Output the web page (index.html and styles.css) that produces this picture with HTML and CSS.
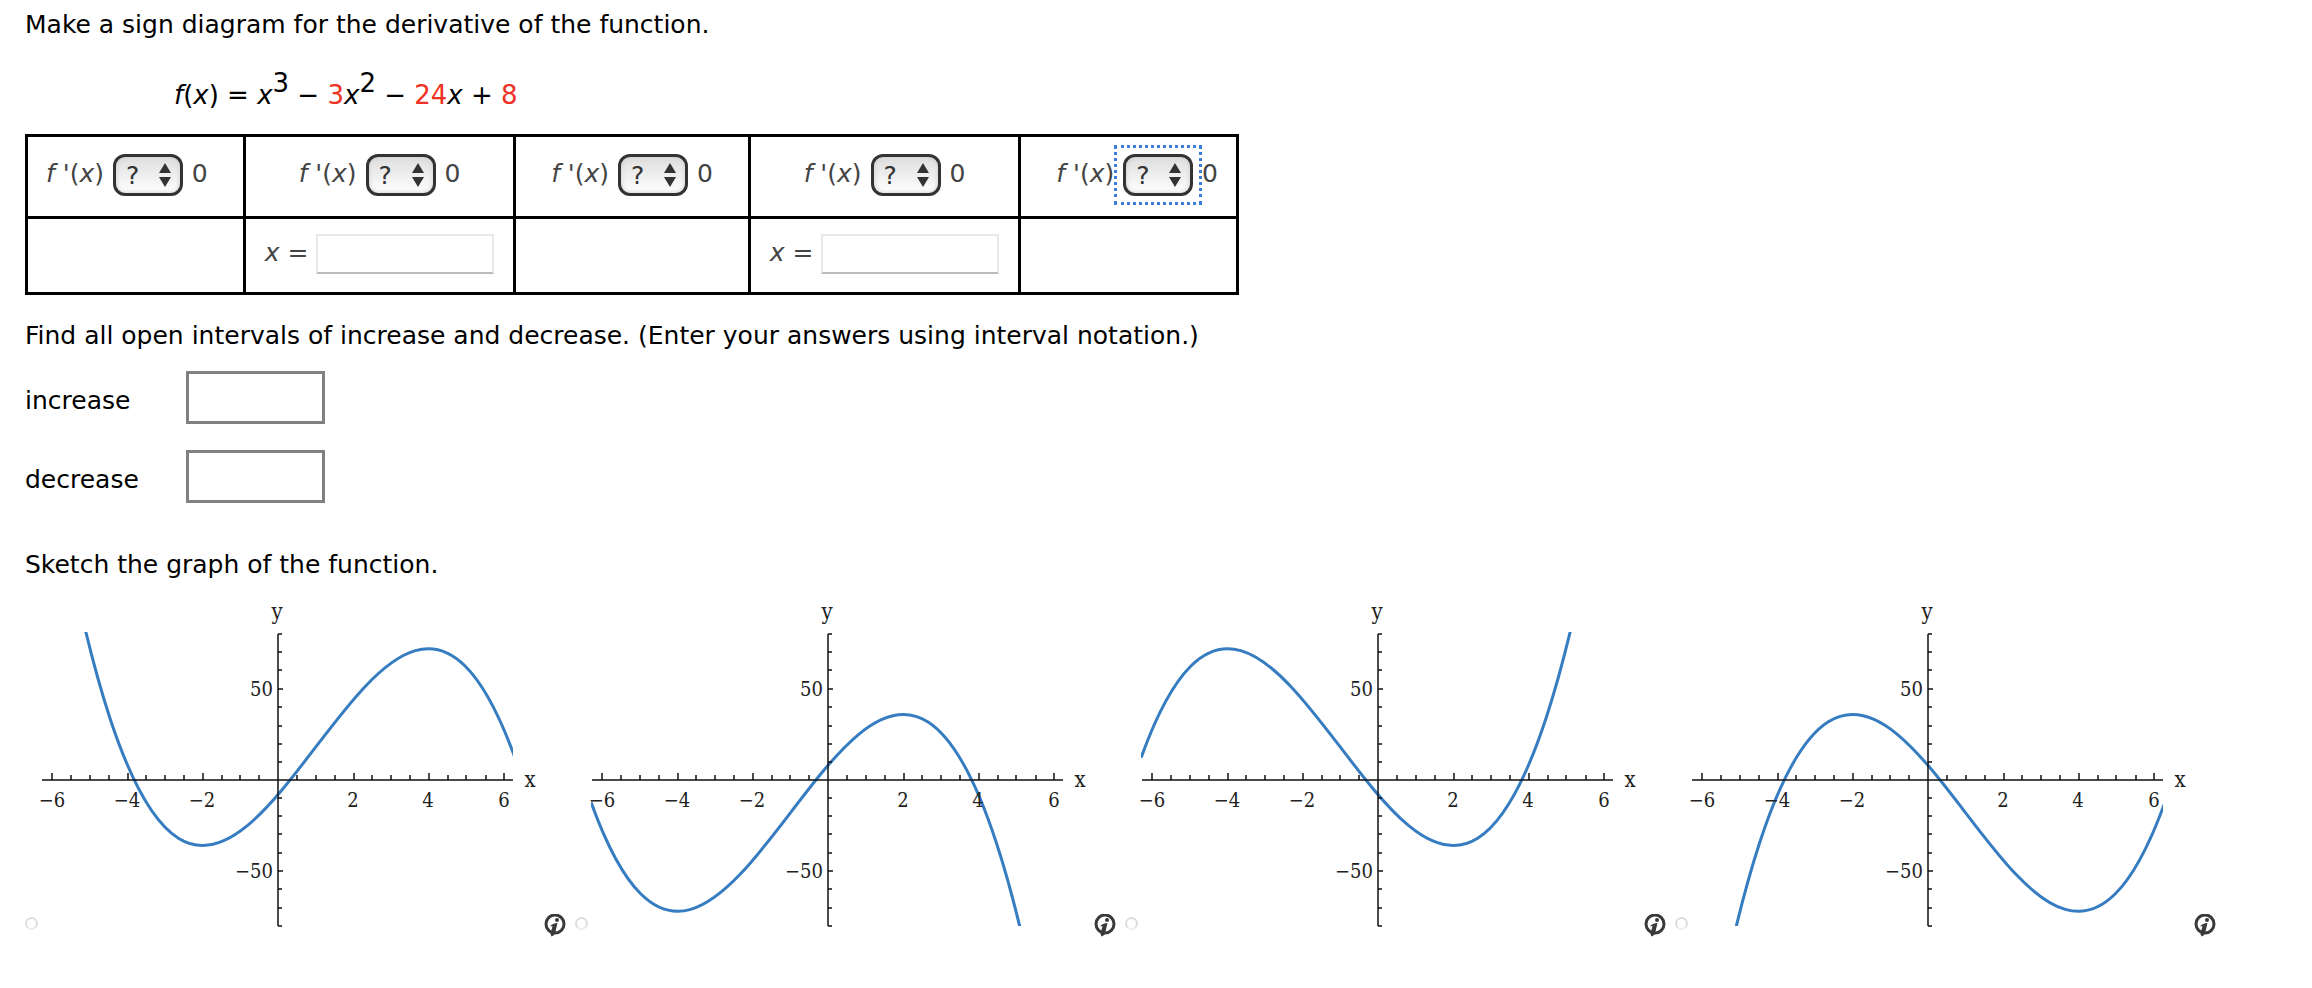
FILE: index.html
```html
<!DOCTYPE html>
<html lang="en">
  <head>
    <meta charset="UTF-8" />
    <meta name="viewport" content="width=device-width, initial-scale=1.0" />
    <title>Sign diagram</title>
    <link rel="stylesheet" href="styles.css">
  </head>
  <body>
    <!-- shared drawing parts -->
    <svg class="defs" width="0" height="0" aria-hidden="true">
      <defs>
        <clipPath id="plotArea">
          <rect x="-237" y="-148" width="472" height="294" />
        </clipPath>
        <!-- x^3 - 3x^2 - 24x + 8 -->
        <path id="cubic" d="M-236.9 382.9C-79 -635 79 461 236.9 22.3" />
        <g id="axes">
          <path d="M-236 0H235M0 -146V146" />
          <path d="M-226 0v-7M-150 0v-7M-75 0v-7M76 0v-7M151 0v-7M226 0v-7" />
          <path d="M-207 0v-5M-188 0v-5M-169 0v-5M-132 0v-5M-113 0v-5M-94 0v-5M-56 0v-5M-38 0v-5M-19 0v-5M19 0v-5M38 0v-5M57 0v-5M94 0v-5M113 0v-5M132 0v-5M170 0v-5M188 0v-5M208 0v-5" />
          <path d="M0 -91h5M0 91h5" />
          <path d="M0 -146h4M0 -128h4M0 -110h4M0 -73h4M0 -54h4M0 -36h4M0 -18h4M0 18h4M0 36h4M0 54h4M0 73h4M0 109h4M0 128h4M0 146h4" />
        </g>
        <g id="info">
          <circle cx="11" cy="10" r="9" fill="none" stroke="#3a3a3a" stroke-width="3" />
          <circle cx="13" cy="6" r="2" fill="#3a3a3a" />
          <path d="M6 12.500Q8.500 9 13.500 9L11.500 17.500Q11 21.500 7.500 22.500L6.500 20L8.500 12Z" fill="#3a3a3a" />
        </g>
      </defs>
    </svg>

    <main>
      <p>Make a sign diagram for the derivative of the function.</p>
      <p class="formula"><i>f</i>(<i>x</i>) = <i>x</i><sup>3</sup> − <b>3</b><i>x</i><sup>2</sup> − <b>24</b><i>x</i> + <b>8</b></p>

      <table>
        <tr>
          <td class="first">
            <i>f '</i>(<i>x</i>)
            <span class="picker"><select aria-label="sign 1"><option>?</option></select><svg width="12" height="24" viewBox="0 0 12 24"><path d="M6 0l6 10H0zM0 14h12L6 24z" /></svg></span>
            0
          </td>
          <td class="wide">
            <i>f '</i>(<i>x</i>)
            <span class="picker"><select aria-label="sign 2"><option>?</option></select><svg width="12" height="24" viewBox="0 0 12 24"><path d="M6 0l6 10H0zM0 14h12L6 24z" /></svg></span>
            0
          </td>
          <td class="middle">
            <i>f '</i>(<i>x</i>)
            <span class="picker"><select aria-label="sign 3"><option>?</option></select><svg width="12" height="24" viewBox="0 0 12 24"><path d="M6 0l6 10H0zM0 14h12L6 24z" /></svg></span>
            0
          </td>
          <td class="wide">
            <i>f '</i>(<i>x</i>)
            <span class="picker"><select aria-label="sign 4"><option>?</option></select><svg width="12" height="24" viewBox="0 0 12 24"><path d="M6 0l6 10H0zM0 14h12L6 24z" /></svg></span>
            0
          </td>
          <td class="last">
            <i>f '</i>(<i>x</i>)
            <span class="picker active"><select aria-label="sign 5"><option>?</option></select><svg width="12" height="24" viewBox="0 0 12 24"><path d="M6 0l6 10H0zM0 14h12L6 24z" /></svg></span>
            0
          </td>
        </tr>
        <tr>
          <td></td>
          <td><label for="x1"><i>x</i> =</label> <input type="text" id="x1" /></td>
          <td></td>
          <td><label for="x2"><i>x</i> =</label> <input type="text" id="x2" /></td>
          <td></td>
        </tr>
      </table>

      <p class="find">Find all open intervals of increase and decrease. (Enter your answers using interval notation.)</p>
      <form class="answers">
        <label for="increase">increase</label>
        <input type="text" id="increase" />
        <label for="decrease">decrease</label>
        <input type="text" id="decrease" />
      </form>

      <p>Sketch the graph of the function.</p>
      <div class="graphs">
        <div class="graph">
          <input type="radio" name="graph" id="g1" aria-label="graph 1" />
          <label for="g1">
            <svg width="506" height="346" viewBox="-240 -188 506 346">
              <g clip-path="url(#plotArea)"><use href="#cubic" class="curve" transform="scale(1 -1)" /></g>
              <use href="#axes" class="axes" />
              <text class="name" x="-1" y="-161">y</text>
              <text class="name" x="252" y="7">x</text>
              <text x="-226" y="27">−6</text>
              <text x="-151" y="27">−4</text>
              <text x="-76" y="27">−2</text>
              <text x="75" y="27">2</text>
              <text x="150" y="27">4</text>
              <text x="226" y="27">6</text>
              <text class="side" x="-5" y="-84">50</text>
              <text class="side" x="-5" y="98">−50</text>
            </svg>
          </label>
          <svg class="info" width="22" height="23"><use href="#info" /></svg>
        </div>
        <div class="graph">
          <input type="radio" name="graph" id="g2" aria-label="graph 2" />
          <label for="g2">
            <svg width="506" height="346" viewBox="-240 -188 506 346">
              <g clip-path="url(#plotArea)"><use href="#cubic" class="curve" transform="scale(-1 1)" /></g>
              <use href="#axes" class="axes" />
              <text class="name" x="-1" y="-161">y</text>
              <text class="name" x="252" y="7">x</text>
              <text x="-226" y="27">−6</text>
              <text x="-151" y="27">−4</text>
              <text x="-76" y="27">−2</text>
              <text x="75" y="27">2</text>
              <text x="150" y="27">4</text>
              <text x="226" y="27">6</text>
              <text class="side" x="-5" y="-84">50</text>
              <text class="side" x="-5" y="98">−50</text>
            </svg>
          </label>
          <svg class="info" width="22" height="23"><use href="#info" /></svg>
        </div>
        <div class="graph">
          <input type="radio" name="graph" id="g3" aria-label="graph 3" />
          <label for="g3">
            <svg width="506" height="346" viewBox="-240 -188 506 346">
              <g clip-path="url(#plotArea)"><use href="#cubic" class="curve" transform="scale(-1 -1)" /></g>
              <use href="#axes" class="axes" />
              <text class="name" x="-1" y="-161">y</text>
              <text class="name" x="252" y="7">x</text>
              <text x="-226" y="27">−6</text>
              <text x="-151" y="27">−4</text>
              <text x="-76" y="27">−2</text>
              <text x="75" y="27">2</text>
              <text x="150" y="27">4</text>
              <text x="226" y="27">6</text>
              <text class="side" x="-5" y="-84">50</text>
              <text class="side" x="-5" y="98">−50</text>
            </svg>
          </label>
          <svg class="info" width="22" height="23"><use href="#info" /></svg>
        </div>
        <div class="graph">
          <input type="radio" name="graph" id="g4" aria-label="graph 4" />
          <label for="g4">
            <svg width="506" height="346" viewBox="-240 -188 506 346">
              <g clip-path="url(#plotArea)"><use href="#cubic" class="curve" /></g>
              <use href="#axes" class="axes" />
              <text class="name" x="-1" y="-161">y</text>
              <text class="name" x="252" y="7">x</text>
              <text x="-226" y="27">−6</text>
              <text x="-151" y="27">−4</text>
              <text x="-76" y="27">−2</text>
              <text x="75" y="27">2</text>
              <text x="150" y="27">4</text>
              <text x="226" y="27">6</text>
              <text class="side" x="-5" y="-84">50</text>
              <text class="side" x="-5" y="98">−50</text>
            </svg>
          </label>
          <svg class="info" width="22" height="23"><use href="#info" /></svg>
        </div>
      </div>
    </main>
  </body>
</html>
```

FILE: styles.css
```css
* {
  margin: 0;
  padding: 0;
  box-sizing: border-box;
}
body {
  background-color: #ffffff;
  color: #000000;
  font-family: Verdana, "DejaVu Sans", sans-serif;
  font-size: 25px;
  line-height: 32px;
}
main {
  padding: 9px 25px;
}

.defs {
  position: absolute;
}

.formula {
  margin: 38px 0 23px;
  padding-left: 149px;
  font-size: 26px;
}

.formula sup {
  font-size: 26px;
  line-height: 0;
  vertical-align: 12px;
}

.formula b {
  font-weight: normal;
  color: #ee3124;
}

table {
  border-collapse: collapse;
  color: #444444;
}

td {
  height: 82px;
  padding: 0 18px 3px;
  border: 3px solid #000000;
  text-align: center;
  vertical-align: middle;
  white-space: nowrap;
}

tr:nth-child(2) td {
  height: 76px;
}

.first,
.last {
  width: 218px;
}

.first {
  text-align: left;
}

.last {
  text-align: right;
}

.wide {
  width: 270px;
}

.middle {
  width: 235px;
}

td input {
  width: 178px;
  height: 40px;
  border: 2px solid #e8e8e8;
  border-bottom-color: #bbbbbb;
  vertical-align: middle;
}

.picker {
  display: inline-block;
  position: relative;
  height: 42px;
  margin: 0 1px;
  vertical-align: middle;
}

.picker select {
  appearance: none;
  display: block;
  width: 70px;
  height: 42px;
  padding-left: 10px;
  border: 3px solid #333333;
  border-radius: 12px;
  background: linear-gradient(#dedede, #ffffff);
  box-shadow: inset 0 0 5px #cccccc;
  color: #333333;
  font-family: "DejaVu Sans", sans-serif;
  font-size: 25px;
}

.picker svg {
  position: absolute;
  right: 12px;
  top: 9px;
  fill: #333333;
  pointer-events: none;
}

.active {
  outline: 3px dotted #3b7ddd;
  outline-offset: 6px;
}

.find {
  margin: 25px 0 19px;
}

.answers {
  display: grid;
  grid-template-columns: 161px 139px;
  align-items: center;
  row-gap: 26px;
  margin-bottom: 46px;
}

.answers label {
  padding-top: 7px;
}

.answers input {
  height: 53px;
  border: 3px solid #808080;
}

.graphs {
  display: flex;
  flex-wrap: wrap;
  gap: 9px;
  margin-top: 11px;
}

.graph {
  display: flex;
  align-items: flex-end;
}

.graph label,
.graph svg {
  display: block;
}

.graph input {
  appearance: none;
  width: 13px;
  height: 13px;
  margin-bottom: 8px;
  border: 2px solid #dddddd;
  border-bottom-color: #eeeeee;
  border-radius: 50%;
}

.graph .info {
  margin-bottom: 1px;
}

.graph text {
  font-family: "DejaVu Serif Condensed", "DejaVu Serif", serif;
  font-size: 20px;
  text-anchor: middle;
  fill: #222222;
}

.graph .name {
  font-size: 22px;
}

.graph .side {
  text-anchor: end;
}

.curve {
  fill: none;
  stroke: #367cc0;
  stroke-width: 3;
}

.axes {
  fill: none;
  stroke: #111111;
  stroke-width: 1.5;
}
```
